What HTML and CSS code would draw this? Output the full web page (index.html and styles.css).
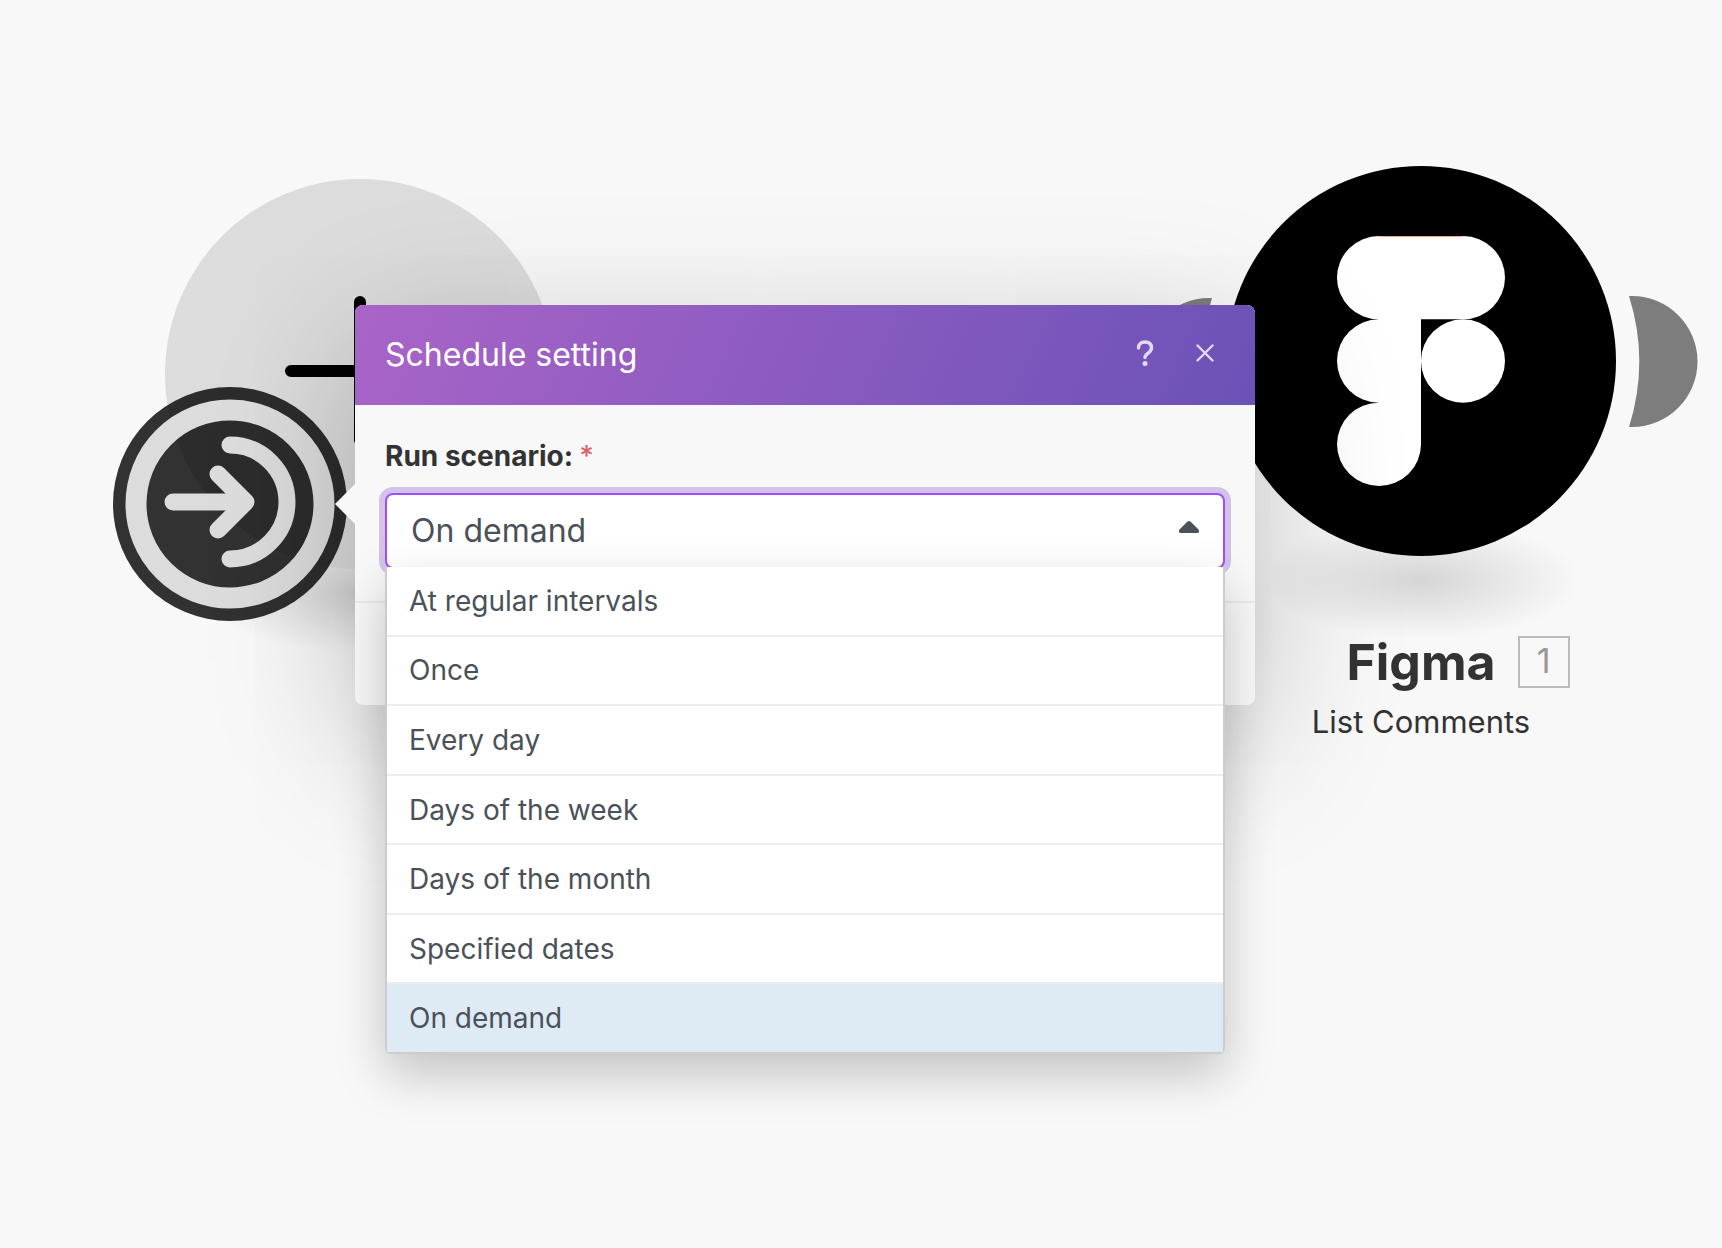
FILE: index.html
```html
<!DOCTYPE html>
<html lang="en">
<head>
  <meta charset="UTF-8">
  <title>Schedule setting</title>
  <link rel="stylesheet" href="styles.css">
</head>
<body>
  <main class="canvas">
    <div class="node node-empty">
      <div class="node-shadow"></div>
      <div class="node-circle">
        <svg width="150" height="150" viewBox="0 0 150 150">
          <path d="M75 6v138M6 75h138" stroke="#000" stroke-width="12" stroke-linecap="round"/>
        </svg>
      </div>
    </div>

    <button class="schedule-btn" aria-label="Schedule">
      <svg width="234" height="234" viewBox="0 0 234 234" fill="none">
        <circle cx="117" cy="117" r="117" fill="#000" fill-opacity="0.8"/>
        <circle cx="117" cy="117" r="94" stroke="#dcdcdc" stroke-width="21"/>
        <g stroke="#dcdcdc" stroke-width="17" stroke-linecap="round" stroke-linejoin="round">
          <path d="M60 115h72"/>
          <path d="M105 87l28 28-28 28"/>
          <path d="M117 58a57 57 0 0 1 0 114"/>
        </g>
      </svg>
    </button>

    <div class="node node-figma">
      <div class="node-shadow"></div>
      <svg class="ports" width="580" height="390" viewBox="0 0 580 390">
        <path d="M81 132h-3a65 65 0 0 0 0 130h3a218 218 0 0 1 0-130z" fill="#7d7d7d"/>
        <path d="M498 130h3a65 65 0 0 1 0 131h-3a218 218 0 0 0 0-131z" fill="#7d7d7d"/>
      </svg>
      <div class="node-circle">
        <svg width="168" height="250" viewBox="0 0 200 300" preserveAspectRatio="none" fill="#fff">
          <path d="M50 0h100a50 50 0 0 1 0 100H100v150a50 50 0 1 1-50-50a50 50 0 0 1 0-100a50 50 0 0 1 0-100z"/>
          <circle cx="150" cy="150" r="50"/>
          <path d="M50 0h100v1H50z" fill="#e8825c"/>
        </svg>
      </div>
      <div class="node-title">Figma<span class="badge">1</span></div>
      <div class="node-subtitle">List Comments</div>
    </div>

    <section class="popup">
      <header class="popup-header">
        <h2>Schedule setting</h2>
        <button aria-label="Help">
          <svg width="18" height="26" viewBox="0 0 18 26" fill="none">
            <path d="M2.500 8c0-4 2.500-6 6.500-6s6.500 2 6.500 6c0 5-6.500 5-6.500 9.500" stroke="currentColor" stroke-width="3.400" stroke-linecap="round"/>
            <circle cx="9" cy="23.500" r="2.500" fill="currentColor"/>
          </svg>
        </button>
        <button aria-label="Close">
          <svg width="18" height="18" viewBox="0 0 18 18">
            <path d="M1.500 1.500l15 15M16.500 1.500l-15 15" stroke="currentColor" stroke-width="2.400" stroke-linecap="round"/>
          </svg>
        </button>
      </header>
      <div class="popup-body">
        <label for="run-scenario">Run scenario:<span class="required">*</span></label>
        <div class="select-wrap">
          <select id="run-scenario">
            <option>At regular intervals</option>
            <option>Once</option>
            <option>Every day</option>
            <option>Days of the week</option>
            <option>Days of the month</option>
            <option>Specified dates</option>
            <option selected>On demand</option>
          </select>
          <svg class="caret" width="20" height="12" viewBox="0 0 20 12">
            <path d="M8.500 .6q1.500-1.200 3 0L19.500 8.500Q21 12 18 12H2Q-1 12 .5 8.500z" fill="#4a5159"/>
          </svg>
          <ul class="options" role="listbox">
            <li role="option">At regular intervals</li>
            <li role="option">Once</li>
            <li role="option">Every day</li>
            <li role="option">Days of the week</li>
            <li role="option">Days of the month</li>
            <li role="option">Specified dates</li>
            <li role="option" class="selected" aria-selected="true">On demand</li>
          </ul>
        </div>
      </div>
      <footer class="popup-footer"></footer>
    </section>
  </main>
</body>
</html>
```
FILE: styles.css
```css
* {
  box-sizing: border-box;
}
body {
  margin: 0;
  font-family: Inter, "Liberation Sans", sans-serif;
  background: #f8f8f8;
  color: #333;
}
button {
  padding: 0;
  border: none;
  background: none;
  cursor: pointer;
}
svg {
  display: block;
}
.canvas {
  position: relative;
  min-height: 100vh;
  overflow: hidden;
}

/* modules on the canvas */
.node {
  position: absolute;
  width: 390px;
  text-align: center;
}
.node-empty {
  left: 165px;
  top: 179px;
}
.node-figma {
  left: 1226px;
  top: 166px;
}
.node-circle {
  position: relative;
  display: flex;
  align-items: center;
  justify-content: center;
  height: 390px;
  border-radius: 50%;
  background: #dcdcdc;
}
.node-empty .node-circle {
  padding-bottom: 6px;
}
.node-figma .node-circle {
  background: #000;
}
.node-shadow {
  position: absolute;
  left: 35px;
  top: 354px;
  width: 320px;
  height: 120px;
  background: radial-gradient(closest-side, rgba(0,0,0,0.14), rgba(0,0,0,0));
}
.ports {
  position: absolute;
  left: -95px;
  top: 0;
}
.node-title {
  position: relative;
  width: fit-content;
  margin: 74px auto 0;
  font-size: 50px;
  line-height: 64px;
  font-weight: 700;
}
.badge {
  position: absolute;
  left: 100%;
  top: 6px;
  width: 52px;
  height: 52px;
  margin-left: 22px;
  border: 2px solid #bbb;
  color: #999;
  font-size: 34px;
  line-height: 46px;
  font-weight: 400;
}
.node-subtitle {
  margin-top: 10px;
  font-size: 31px;
  line-height: 36px;
}
.schedule-btn {
  position: absolute;
  left: 113px;
  top: 387px;
}

/* settings popup */
.popup {
  position: absolute;
  left: 355px;
  top: 305px;
  width: 900px;
  border-radius: 8px;
  background: #f8f8f8;
  box-shadow: 0 40px 150px rgba(0,0,0,0.24);
}
.popup::before {
  content: "";
  position: absolute;
  left: -20px;
  top: 179px;
  border: 20px solid transparent;
  border-left: none;
  border-right-color: #f8f8f8;
}
.popup-header {
  display: flex;
  align-items: center;
  height: 100px;
  padding: 0 41px 2px 30px;
  border-radius: 8px 8px 0 0;
  background: linear-gradient(115deg, #aa64c8, #6b52b8);
  color: #fff;
}
.popup-header h2 {
  flex: 1;
  margin: 0;
  font-size: 32px;
  font-weight: 400;
}
.popup-header button {
  margin-left: 42px;
  color: #e1dcf1;
}
.popup-header svg {
  margin-bottom: 2px;
}
.popup-body {
  padding: 33px 30px 32px;
}
.popup-body label {
  display: block;
  margin-bottom: 19px;
  font-size: 28px;
  line-height: 36px;
  font-weight: 700;
}
.required {
  margin-left: 6px;
  color: #e0606a;
  font-weight: 500;
}
.select-wrap {
  position: relative;
}
.select-wrap select {
  display: block;
  width: 100%;
  height: 76px;
  padding: 0 24px 2px;
  appearance: none;
  border: 2px solid #9b51f5;
  border-radius: 8px;
  outline: none;
  box-shadow: 0 0 0 6px #d3c3eb;
  background: #fff;
  color: #4a5159;
  font-family: inherit;
  font-size: 32px;
}
.caret {
  position: absolute;
  right: 26px;
  top: 28px;
}
.options {
  position: absolute;
  left: 0;
  right: 0;
  top: 74px;
  display: flex;
  flex-direction: column;
  height: 487px;
  margin: 0;
  padding: 0;
  list-style: none;
  border: 2px solid #ccc;
  border-top: none;
  border-radius: 0 0 6px 6px;
  background: #fff;
  box-shadow: 0 20px 50px rgba(0,0,0,0.22);
  color: #4a5159;
  font-size: 28px;
}
.options li {
  display: flex;
  flex: 1 1 auto;
  align-items: center;
  padding: 0 22px;
  border-bottom: 2px solid #ededed;
}
.options li:last-child {
  border-bottom: none;
}
.options .selected {
  background: #deebf5;
}
.popup-footer {
  height: 104px;
  border-top: 2px solid #e9e9e9;
}
```
